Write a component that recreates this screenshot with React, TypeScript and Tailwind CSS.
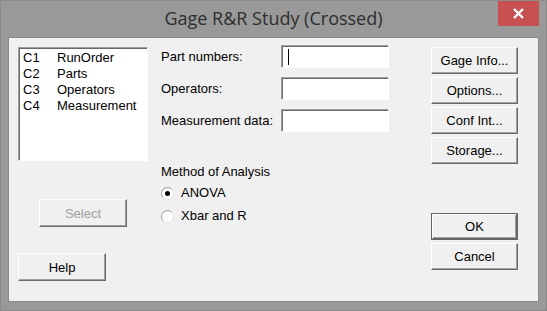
import React, { useState } from 'react';

const font = { fontFamily: '"Liberation Sans", Arial, sans-serif' };

const Btn: React.FC<{ label: string; disabled?: boolean; isDefault?: boolean; className?: string }> = ({ label, disabled, isDefault, className }) => (
    <div className={`${className ?? ''} ${isDefault ? 'border border-[#646464]' : ''}`}>
        <button
            disabled={disabled}
            className={`w-full h-full bg-[#f0f0f0] border border-t-white border-l-white border-b-[#696969] border-r-[#696969] shadow-[inset_-1px_-1px_0_#a0a0a0] text-[13px] leading-none ${disabled ? 'text-[#a0a0a0]' : 'text-black'}`}
        >
            {label}
        </button>
    </div>
);

const Field: React.FC<{ label: string; cursor?: boolean }> = ({ label, cursor }) => (
    <div className="flex items-center h-[23px]">
        <span className="w-[120px] text-[13px] text-black">{label}</span>
        <div className="w-[108px] h-[23px] bg-white border border-t-[#a0a0a0] border-l-[#a0a0a0] border-b-white border-r-white shadow-[inset_1px_1px_0_#696969] flex items-center pl-[6px]">
            {cursor && <div className="w-px h-[16px] bg-black" />}
        </div>
    </div>
);

const Radio: React.FC<{ label: string; checked: boolean; onClick: () => void }> = ({ label, checked, onClick }) => (
    <div className="flex items-center h-[20px] gap-[7px] cursor-default" onClick={onClick}>
        <div className="w-[13px] h-[13px] rounded-full bg-white border border-t-[#a0a0a0] border-l-[#a0a0a0] border-b-[#e3e3e3] border-r-[#e3e3e3] flex items-center justify-center">
            {checked && <div className="w-[5px] h-[5px] rounded-full bg-black" />}
        </div>
        <span className="text-[13px] text-black">{label}</span>
    </div>
);

const cols = [
    ['C1', 'RunOrder'],
    ['C2', 'Parts'],
    ['C3', 'Operators'],
    ['C4', 'Measurement'],
];

export default function App() {
    const [method, setMethod] = useState<'anova' | 'xbar'>('anova');

    return (
        <div className="w-[547px] h-[311px] bg-[#999999] flex flex-col border border-[#8a8a8a]" style={font}>
            {/* title bar */}
            <div className="h-[36px] grid grid-cols-[1fr_auto_1fr] items-start">
                <div />
                <div className="pt-[5px] text-[18px] leading-[24px] text-[#2e2e2e]" style={{ fontFamily: '"Open Sans", "Noto Sans", sans-serif' }}>
                    Gage R&amp;R Study (Crossed)
                </div>
                <div className="flex justify-end pr-[7px]">
                    <div className="w-[41px] h-[25px] bg-[#c75050] flex items-center justify-center">
                        <svg width="11" height="11" viewBox="0 0 11 11">
                            <path d="M1 1 L10 10 M10 1 L1 10" stroke="white" strokeWidth="2.4" />
                        </svg>
                    </div>
                </div>
            </div>

            {/* client */}
            <div className="mx-[7px] h-[265px] bg-[#f0f0f0] border border-[#8a8a8a] flex">
                {/* left */}
                <div className="pl-[9px] pt-[9px] w-[140px] flex flex-col">
                    <div className="w-[130px] h-[114px] bg-white border border-t-[#a0a0a0] border-l-[#a0a0a0] border-b-white border-r-white shadow-[inset_1px_1px_0_#696969] pt-[2px] pl-[4px]">
                        {cols.map(([c, n]) => (
                            <div key={c} className="flex h-[16px] items-center text-[13px] text-black">
                                <span className="w-[34px]">{c}</span>
                                <span>{n}</span>
                            </div>
                        ))}
                    </div>
                    <Btn label="Select" disabled className="ml-[21px] mt-[38px] w-[88px] h-[28px]" />
                    <Btn label="Help" className="mt-[26px] w-[88px] h-[28px]" />
                </div>

                {/* middle */}
                <div className="ml-[12px] pt-[7px] flex flex-col">
                    <div className="flex flex-col gap-[9px]">
                        <Field label="Part numbers:" cursor />
                        <Field label="Operators:" />
                        <Field label="Measurement data:" />
                    </div>
                    <div className="mt-[32px] h-[16px] flex items-center text-[13px] text-black">Method of Analysis</div>
                    <div className="mt-[3px] flex flex-col gap-[3px]">
                        <Radio label="ANOVA" checked={method === 'anova'} onClick={() => setMethod('anova')} />
                        <Radio label="Xbar and R" checked={method === 'xbar'} onClick={() => setMethod('xbar')} />
                    </div>
                </div>

                {/* right */}
                <div className="ml-auto mr-[20px] pt-[9px] flex flex-col">
                    <div className="flex flex-col gap-[3px]">
                        <Btn label="Gage Info..." className="w-[87px] h-[27px]" />
                        <Btn label="Options..." className="w-[87px] h-[27px]" />
                        <Btn label="Conf Int..." className="w-[87px] h-[27px]" />
                        <Btn label="Storage..." className="w-[87px] h-[27px]" />
                    </div>
                    <div className="mt-[49px] flex flex-col gap-[3px]">
                        <Btn label="OK" isDefault className="w-[87px] h-[27px]" />
                        <Btn label="Cancel" className="w-[87px] h-[27px]" />
                    </div>
                </div>
            </div>
        </div>
    );
}
